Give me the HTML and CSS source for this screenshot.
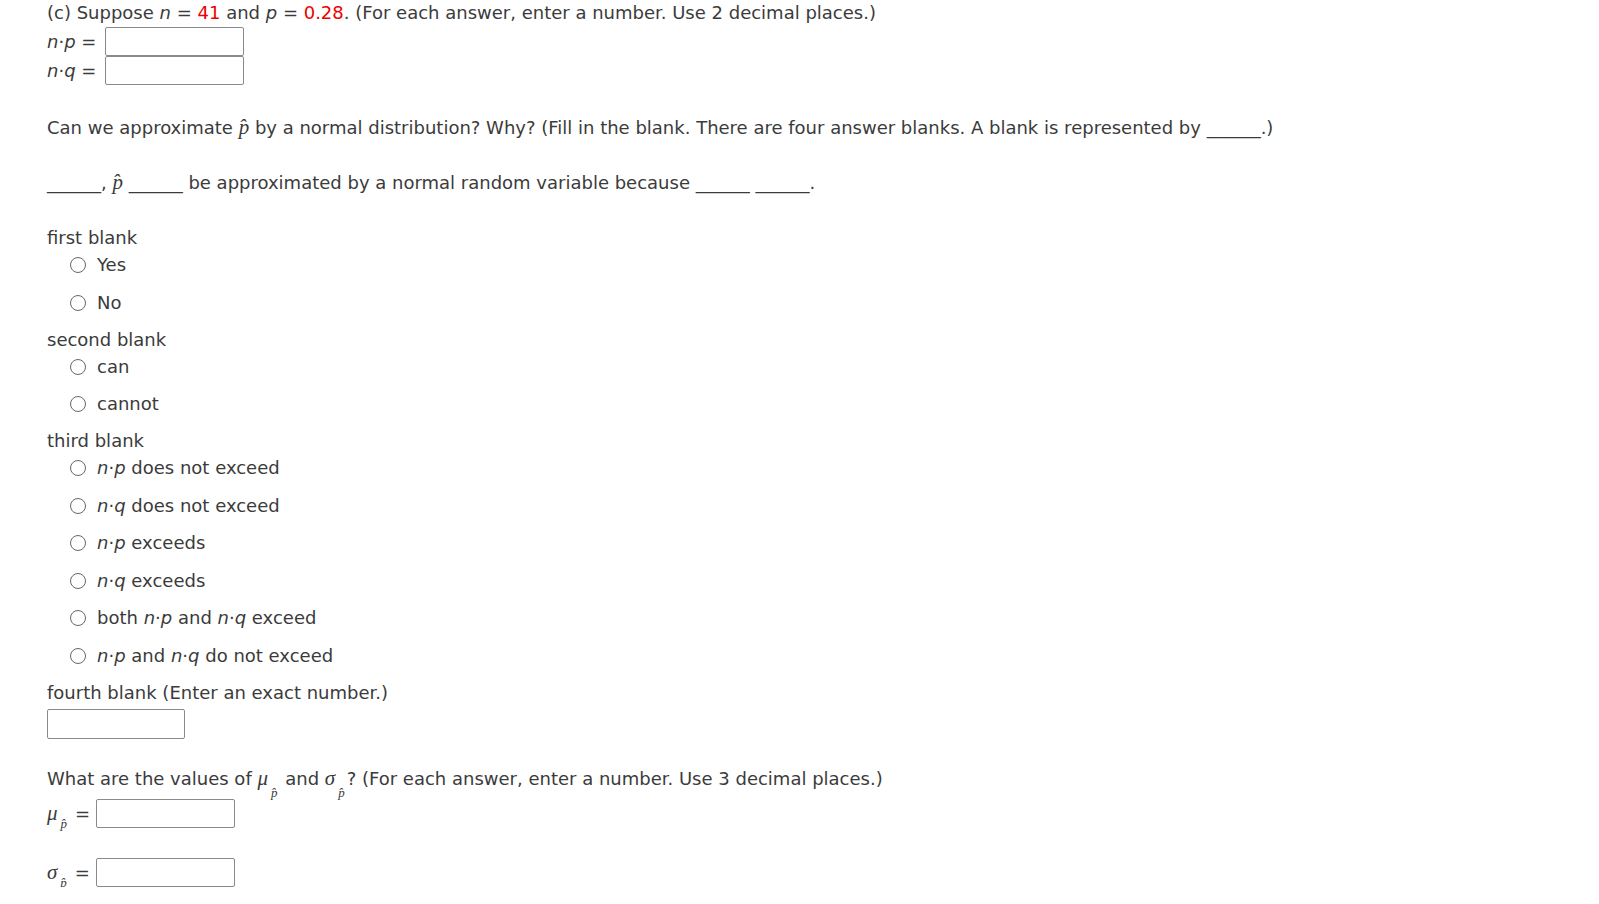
FILE: index.html
```html
<!DOCTYPE html>
<html lang="en">
<head>
    <meta charset="UTF-8">
    <title>Normal approximation</title>
    <link rel="stylesheet" href="styles.css">
</head>
<body>
<div class="question">

    <p class="line">(c) Suppose <i>n</i> = <span class="given">41</span> and <i>p</i> = <span class="given">0.28</span>. (For each answer, enter a number. Use 2 decimal places.)</p>
    <div class="calc">
        <label class="calc-row"><span class="calc-name"><i>n</i>·<i>p</i> =</span><input type="text" class="answer"></label>
        <label class="calc-row"><span class="calc-name"><i>n</i>·<i>q</i> =</span><input type="text" class="answer"></label>
    </div>

    <p class="line ask">Can we approximate <span class="mhat">p̂</span> by a normal distribution? Why? (Fill in the blank. There are four answer blanks. A blank is represented by ______.)</p>

    <p class="line sentence">______, <span class="mhat">p̂</span> ______ be approximated by a normal random variable because ______ ______.</p>

    <div class="group first">
        <div class="group-label">first blank</div>
        <label class="choice"><input type="radio" name="b1"><span>Yes</span></label>
        <label class="choice"><input type="radio" name="b1"><span>No</span></label>
    </div>

    <div class="group">
        <div class="group-label">second blank</div>
        <label class="choice"><input type="radio" name="b2"><span>can</span></label>
        <label class="choice"><input type="radio" name="b2"><span>cannot</span></label>
    </div>

    <div class="group">
        <div class="group-label">third blank</div>
        <label class="choice"><input type="radio" name="b3"><span><i>n</i>·<i>p</i> does not exceed</span></label>
        <label class="choice"><input type="radio" name="b3"><span><i>n</i>·<i>q</i> does not exceed</span></label>
        <label class="choice"><input type="radio" name="b3"><span><i>n</i>·<i>p</i> exceeds</span></label>
        <label class="choice"><input type="radio" name="b3"><span><i>n</i>·<i>q</i> exceeds</span></label>
        <label class="choice"><input type="radio" name="b3"><span>both <i>n</i>·<i>p</i> and <i>n</i>·<i>q</i> exceed</span></label>
        <label class="choice"><input type="radio" name="b3"><span><i>n</i>·<i>p</i> and <i>n</i>·<i>q</i> do not exceed</span></label>
    </div>

    <div class="group">
        <div class="group-label">fourth blank (Enter an exact number.)</div>
        <input type="text" class="answer exact">
    </div>

    <p class="line values">What are the values of <span class="msym">μ</span><span class="msub">p̂</span> and <span class="msym">σ</span><span class="msub">p̂</span>? (For each answer, enter a number. Use 3 decimal places.)</p>
    <label class="stat-row"><span class="stat-name"><span class="msym">μ</span><span class="msub">p̂</span>=</span><input type="text" class="answer"></label>
    <label class="stat-row sigma"><span class="stat-name"><span class="msym">σ</span><span class="msub">p̂</span>=</span><input type="text" class="answer"></label>

</div>
</body>
</html>
```

FILE: styles.css
```css
body {
  margin: 0;
  background: #ffffff;
  color: #3b3b3b;
  font-family: "DejaVu Sans", Verdana, sans-serif;
  font-size: 18px;
}

.question {
  padding-left: 47px;
}

.line {
  margin: 0;
  line-height: 26px;
}

.given {
  color: #ee0000;
}

i {
  font-style: italic;
}

/* n·p and n·q inputs, stacked */
.calc {
  margin-top: 1px;
}

.calc-row {
  display: flex;
  align-items: center;
  height: 29px;
}

.calc-name {
  width: 58px;
  white-space: nowrap;
}

.answer {
  box-sizing: border-box;
  width: 139px;
  height: 29px;
  border: 1px solid #8a8a8a;
  border-radius: 2px;
  padding: 2px 4px;
  font-family: "DejaVu Sans", Verdana, sans-serif;
  font-size: 16px;
  margin: 0;
}

.ask {
  margin-top: 29px;
}

.sentence {
  margin-top: 28px;
}

/* math symbols set like the equation renderer */
.mhat, .msym, .msub {
  font-family: "Liberation Serif", "DejaVu Serif", serif;
  font-style: italic;
}

.mhat {
  font-size: 21px;
}

.msym {
  font-size: 21px;
}

.msub {
  display: inline-block;
  font-size: 13px;
  line-height: 0;
  vertical-align: -12px;
  margin-left: 3px;
  margin-right: 2px;
}

/* radio groups */
.group {
  margin-top: 11px;
}

.group.first {
  margin-top: 29px;
}

.group-label {
  line-height: 26px;
}

.choice {
  display: flex;
  align-items: center;
  line-height: 26px;
  margin-top: 11.5px;
  padding-left: 23px;
}

.group-label + .choice {
  margin-top: 1px;
}

.choice input {
  appearance: none;
  box-sizing: border-box;
  width: 16px;
  height: 16px;
  margin: 0 11px 0 0;
  border: 1px solid #666;
  border-radius: 50%;
  background: #fff;
}

.choice input:checked {
  background: radial-gradient(#333 0 4px, #fff 5px);
}

.exact {
  display: block;
  margin-top: 3px;
  width: 138px;
  height: 30px;
}

.values {
  margin-top: 26px;
}

.stat-row {
  display: flex;
  align-items: center;
  margin-top: 6px;
  height: 29px;
}

.stat-row.sigma {
  margin-top: 30px;
}

.stat-name {
  width: 49px;
  white-space: nowrap;
}

.stat-name .msub {
  vertical-align: -8px;
  margin-right: 8px;
}
```
